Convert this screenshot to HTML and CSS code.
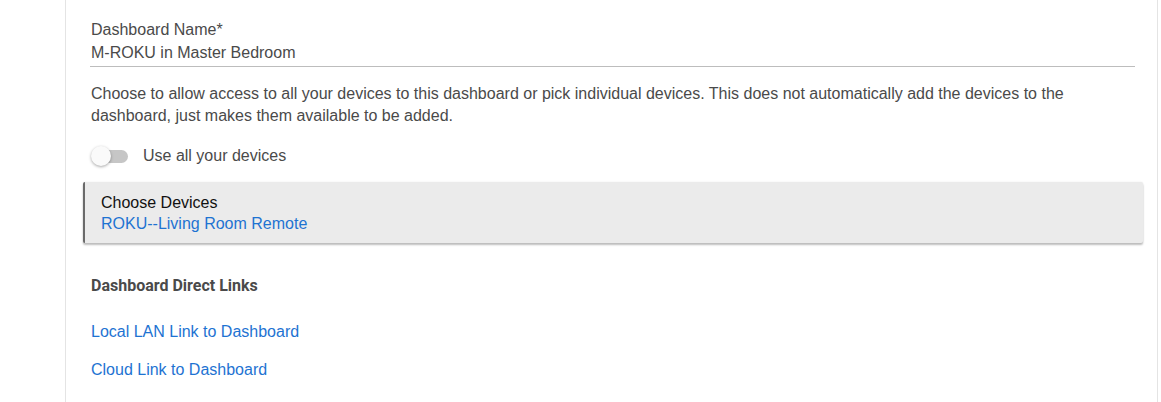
FILE: index.html
```html
<!DOCTYPE html>
<html>
<head>
<meta charset="utf-8">
<link rel="stylesheet" href="styles.css">
</head>
<body>
<div class="page">
  <div class="card">
    <div class="field">
      <div class="field-label">Dashboard Name*</div>
      <div class="field-input">M-ROKU in Master Bedroom</div>
    </div>
    <p class="help">Choose to allow access to all your devices to this dashboard or pick individual devices. This does not automatically add the devices to the dashboard, just makes them available to be added.</p>
    <div class="toggle-row">
      <span class="switch"><span class="track"></span><span class="thumb"></span></span>
      <span class="toggle-label">Use all your devices</span>
    </div>
    <div class="chooser">
      <div class="chooser-title">Choose Devices</div>
      <div class="chooser-value">ROKU--Living Room Remote</div>
    </div>
    <div class="links">
      <div class="links-title">Dashboard Direct Links</div>
      <a class="link" href="#">Local LAN Link to Dashboard</a>
      <a class="link" href="#">Cloud Link to Dashboard</a>
    </div>
  </div>
</div>
</body>
</html>
```
FILE: styles.css
```css
html, body {
  margin: 0;
  padding: 0;
  background: #ffffff;
}
body {
  font-family: "Liberation Sans", Arial, sans-serif;
  font-size: 16px;
  color: #4a4a4a;
}
.page {
  padding-left: 65px;
  padding-right: 3px;
  height: 402px;
  overflow: hidden;
}
.card {
  background: #fff;
  border-left: 1px solid #e4e4e4;
  border-right: 1px solid #e4e4e4;
  height: 100%;
  box-sizing: border-box;
  padding: 19px 22px 0 24px;
}
.field {
  border-bottom: 1px solid #bdbdbd;
  padding-bottom: 1px;
}
.field-label {
  line-height: 22px;
  padding-left: 1px;
}
.field-input {
  line-height: 24px;
  padding-left: 1px;
}
.help {
  margin: 16px 0 0 1px;
  line-height: 22px;
  padding-right: 40px;
}
.toggle-row {
  display: flex;
  align-items: center;
  gap: 15px;
  margin-top: 18px;
  height: 22px;
}
.switch {
  position: relative;
  width: 36px;
  height: 20px;
  display: inline-block;
  margin-left: 2px;
}
.track {
  position: absolute;
  left: 2px;
  top: 4px;
  width: 34px;
  height: 13px;
  border-radius: 7px;
  background: #c6c6c6;
}
.thumb {
  position: absolute;
  left: -1px;
  top: 0;
  width: 20px;
  height: 20px;
  border-radius: 50%;
  background: #fafafa;
  box-shadow: 0 1px 3px rgba(0,0,0,0.35);
}
.toggle-label {
  line-height: 22px;
}
.chooser {
  margin: 15px -8px 0 -7px;
  background: #ebebeb;
  border-left: 2px solid #6a6a6a;
  border-radius: 2px;
  box-shadow: 0 2px 2px rgba(0,0,0,0.25), 0 0 2px rgba(0,0,0,0.08);
  padding: 10px 16px 9px 16px;
}
.chooser-title {
  color: #111;
  line-height: 21px;
}
.chooser-value {
  color: #1e73d2;
  line-height: 21px;
}
.links {
  display: flex;
  flex-direction: column;
  padding-left: 1px;
  margin-top: 33px;
}
.links-title {
  font-family: Roboto, "Liberation Sans", sans-serif;
  font-weight: 700;
  font-size: 16px;
  color: #4a4a4a;
  line-height: 20px;
  margin-bottom: 26px;
}
.link {
  color: #1e73d2;
  text-decoration: none;
  line-height: 20px;
  margin-bottom: 18px;
}
```
